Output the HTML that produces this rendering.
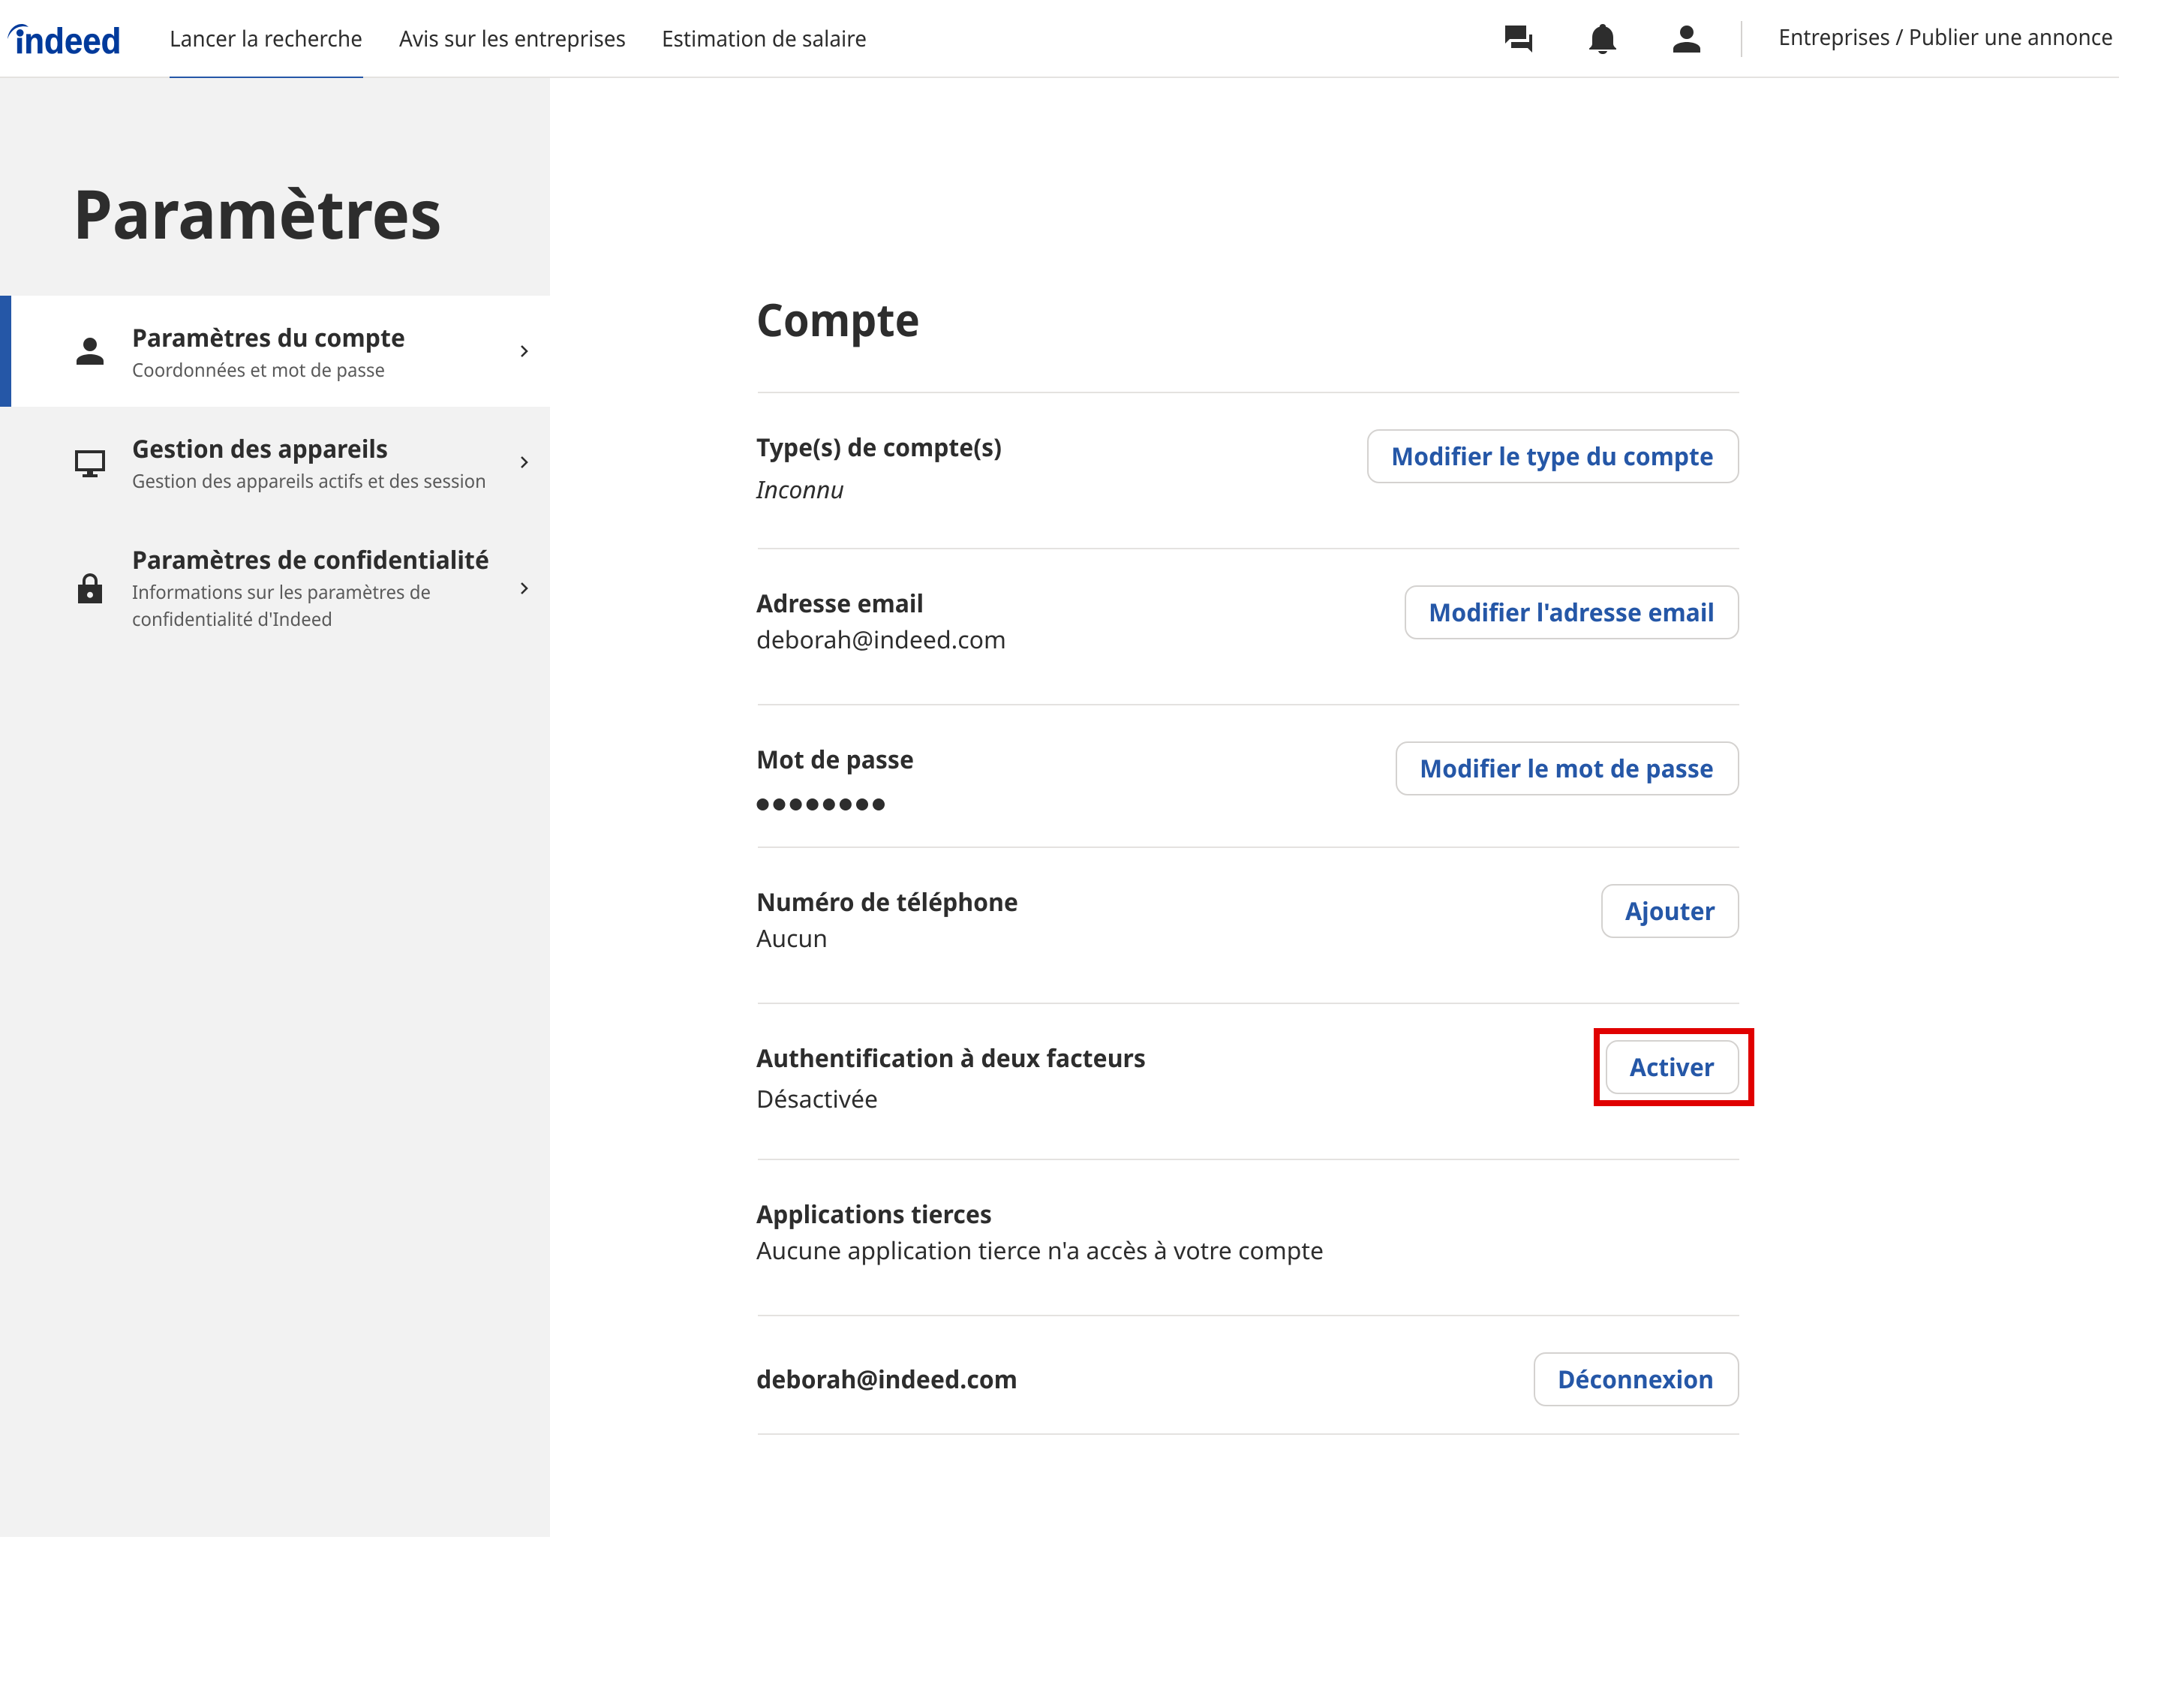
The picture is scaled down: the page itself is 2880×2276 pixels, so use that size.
<!DOCTYPE html>
<html lang="fr">
<head>
<meta charset="utf-8">
<title>Paramètres du compte - Indeed</title>
<style>
html,body{margin:0;padding:0;background:#fff;width:2880px;height:2276px;overflow:hidden}
svg{display:block}
text{font-family:"Noto Sans","Open Sans","Liberation Sans",sans-serif;fill:#2d2d2d;text-rendering:geometricPrecision}
.nav{font-size:29.5px}
.h1{font-size:90px;font-weight:700}
.h2{font-size:60px;font-weight:700}
.st{font-size:33px;font-weight:700}
.ss{font-size:25px;fill:#595959}
.lb{font-size:33px;font-weight:700}
.val{font-size:32px}
.btn{font-size:33px;font-weight:700;fill:#2557a7}
.b{fill:#fff;stroke:#d4d2d0;stroke-width:2}
.ic{fill:#2d2d2d}
.chev{fill:none;stroke:#2d2d2d;stroke-width:2.6}
</style>
</head>
<body>
<svg width="2880" height="2276" viewBox="0 0 2880 2276" xmlns="http://www.w3.org/2000/svg">
<rect x="0" y="0" width="2880" height="2276" fill="#fff"/>

<!-- sidebar -->
<rect x="0" y="104" width="733" height="1944" fill="#f2f2f2"/>
<rect x="0" y="394" width="733" height="148" fill="#fff"/>
<rect x="0" y="394" width="15" height="148" fill="#2557a7"/>

<!-- header -->
<rect x="0" y="102" width="2824" height="2" fill="#e4e2e0"/>
<rect x="226" y="102" width="258" height="2" fill="#2557a7"/>

<!-- logo -->
<text x="20" y="71" style="font-family:'Liberation Sans',sans-serif;font-size:48px;font-weight:700;fill:#003a9b;stroke:#003a9b;stroke-width:.5;stroke-linejoin:round" textLength="141.5" lengthAdjust="spacingAndGlyphs">indeed</text>
<rect x="20" y="36" width="14" height="14.5" fill="#fff"/>
<circle cx="26.7" cy="43.8" r="4.8" fill="#003a9b"/>
<path d="M10 52C11 41 19 32 29 32C32 32 35 33 38 36C30 33.6 16 35 10 52Z" fill="#003a9b"/>

<text class="nav" x="226" y="62" textLength="257" lengthAdjust="spacingAndGlyphs">Lancer la recherche</text>
<text class="nav" x="532" y="62" textLength="302" lengthAdjust="spacingAndGlyphs">Avis sur les entreprises</text>
<text class="nav" x="882" y="62" textLength="273" lengthAdjust="spacingAndGlyphs">Estimation de salaire</text>

<!-- header icons -->
<path class="ic" d="M2006 34H2034V52H2012L2006 58Z"/>
<path class="ic" d="M2038 46H2042V70L2036 64H2014V56H2038Z"/>
<path class="ic" d="M2136 32C2133.5 32 2132 33.5 2131.8 35.6C2125.5 37.6 2122 43 2122 50V58C2122 61 2120 63 2118 64.5V66H2154V64.5C2152 63 2150 61 2150 58V50C2150 43 2146.5 37.6 2140.2 35.6C2140 33.5 2138.5 32 2136 32Z"/>
<path class="ic" d="M2130 68H2142C2141 70.8 2139 72 2136 72C2133 72 2131 70.8 2130 68Z"/>
<circle class="ic" cx="2248" cy="43" r="9"/>
<path class="ic" d="M2230 70V65C2230 59 2240 56 2248 56C2256 56 2266 59 2266 65V70Z"/>
<rect x="2320" y="28" width="2" height="48" fill="#d4d2d0"/>
<text class="nav" x="2370.5" y="60" textLength="445.5" lengthAdjust="spacingAndGlyphs">Entreprises / Publier une annonce</text>

<!-- sidebar content -->
<text class="h1" x="97" y="318" textLength="492" lengthAdjust="spacingAndGlyphs">Paramètres</text>

<circle class="ic" cx="120" cy="459" r="9"/>
<path class="ic" d="M102 486V481C102 475 112 472 120 472C128 472 138 475 138 481V486Z"/>
<text class="st" x="176" y="462" textLength="364" lengthAdjust="spacingAndGlyphs">Paramètres du compte</text>
<text class="ss" x="176" y="502" textLength="337" lengthAdjust="spacingAndGlyphs">Coordonnées et mot de passe</text>
<polyline class="chev" points="695,461 702,468 695,475"/>

<path class="ic" fill-rule="evenodd" d="M100 600H140V628H124V632H130V636H110V632H116V628H100ZM104 604V624H136V604Z"/>
<text class="st" x="176" y="610" textLength="341" lengthAdjust="spacingAndGlyphs">Gestion des appareils</text>
<text class="ss" x="176" y="650" textLength="472" lengthAdjust="spacingAndGlyphs">Gestion des appareils actifs et des session</text>
<polyline class="chev" points="695,609 702,616 695,623"/>

<path class="ic" fill-rule="evenodd" d="M110 779V774A10 10 0 0 1 130 774V779H136V804H104V779ZM114 779H126V774A6 6 0 0 0 114 774ZM124 792.7A4 4 0 1 0 116 792.7A4 4 0 1 0 124 792.7Z"/>
<text class="st" x="176" y="758" textLength="476" lengthAdjust="spacingAndGlyphs">Paramètres de confidentialité</text>
<text class="ss" x="176" y="798" textLength="398" lengthAdjust="spacingAndGlyphs">Informations sur les paramètres de</text>
<text class="ss" x="176" y="834" textLength="267" lengthAdjust="spacingAndGlyphs">confidentialité d'Indeed</text>
<polyline class="chev" points="695,777 702,784 695,791"/>

<!-- main -->
<text class="h2" x="1008" y="448" textLength="218" lengthAdjust="spacingAndGlyphs">Compte</text>

<g fill="#e4e2e0">
<rect x="1010" y="522" width="1308" height="2"/>
<rect x="1010" y="730" width="1308" height="2"/>
<rect x="1010" y="938" width="1308" height="2"/>
<rect x="1010" y="1128" width="1308" height="2"/>
<rect x="1010" y="1336" width="1308" height="2"/>
<rect x="1010" y="1544" width="1308" height="2"/>
<rect x="1010" y="1752" width="1308" height="2"/>
<rect x="1010" y="1910" width="1308" height="2"/>
</g>

<text class="lb" x="1008" y="608" textLength="327" lengthAdjust="spacingAndGlyphs">Type(s) de compte(s)</text>
<text class="val" x="1008" y="664" font-style="italic" textLength="117" lengthAdjust="spacingAndGlyphs">Inconnu</text>
<rect class="b" x="1823" y="573" width="494" height="70" rx="15"/>
<text class="btn" x="1854" y="620" textLength="430" lengthAdjust="spacingAndGlyphs">Modifier le type du compte</text>

<text class="lb" x="1008" y="816" textLength="223" lengthAdjust="spacingAndGlyphs">Adresse email</text>
<text class="val" x="1008" y="864" textLength="333" lengthAdjust="spacingAndGlyphs">deborah@indeed.com</text>
<rect class="b" x="1873" y="781" width="444" height="70" rx="15"/>
<text class="btn" x="1904" y="828" textLength="381" lengthAdjust="spacingAndGlyphs">Modifier l'adresse email</text>

<text class="lb" x="1008" y="1024" textLength="210" lengthAdjust="spacingAndGlyphs">Mot de passe</text>
<g class="ic">
<circle cx="1016.5" cy="1072" r="8"/><circle cx="1038.5" cy="1072" r="8"/><circle cx="1060.6" cy="1072" r="8"/><circle cx="1082.7" cy="1072" r="8"/>
<circle cx="1104.8" cy="1072" r="8"/><circle cx="1126.9" cy="1072" r="8"/><circle cx="1149" cy="1072" r="8"/><circle cx="1171" cy="1072" r="8"/>
</g>
<rect class="b" x="1861" y="989" width="456" height="70" rx="15"/>
<text class="btn" x="1892" y="1036" textLength="392" lengthAdjust="spacingAndGlyphs">Modifier le mot de passe</text>

<text class="lb" x="1008" y="1214" textLength="349" lengthAdjust="spacingAndGlyphs">Numéro de téléphone</text>
<text class="val" x="1008" y="1262" textLength="95" lengthAdjust="spacingAndGlyphs">Aucun</text>
<rect class="b" x="2135" y="1179" width="182" height="70" rx="15"/>
<text class="btn" x="2166" y="1226" textLength="120" lengthAdjust="spacingAndGlyphs">Ajouter</text>

<text class="lb" x="1008" y="1422" textLength="519" lengthAdjust="spacingAndGlyphs">Authentification à deux facteurs</text>
<text class="val" x="1008" y="1476" textLength="162" lengthAdjust="spacingAndGlyphs">Désactivée</text>
<rect class="b" x="2141" y="1387" width="176" height="70" rx="15"/>
<text class="btn" x="2172" y="1434" textLength="113" lengthAdjust="spacingAndGlyphs">Activer</text>
<rect x="2128" y="1374" width="206" height="96" fill="none" stroke="#e00000" stroke-width="8"/>

<text class="lb" x="1008" y="1630" textLength="314" lengthAdjust="spacingAndGlyphs">Applications tierces</text>
<text class="val" x="1008" y="1678" textLength="756" lengthAdjust="spacingAndGlyphs">Aucune application tierce n'a accès à votre compte</text>

<text class="lb" x="1008" y="1850" textLength="348" lengthAdjust="spacingAndGlyphs">deborah@indeed.com</text>
<rect class="b" x="2045" y="1803" width="272" height="70" rx="15"/>
<text class="btn" x="2076" y="1850" textLength="208" lengthAdjust="spacingAndGlyphs">Déconnexion</text>
</svg>
</body>
</html>
